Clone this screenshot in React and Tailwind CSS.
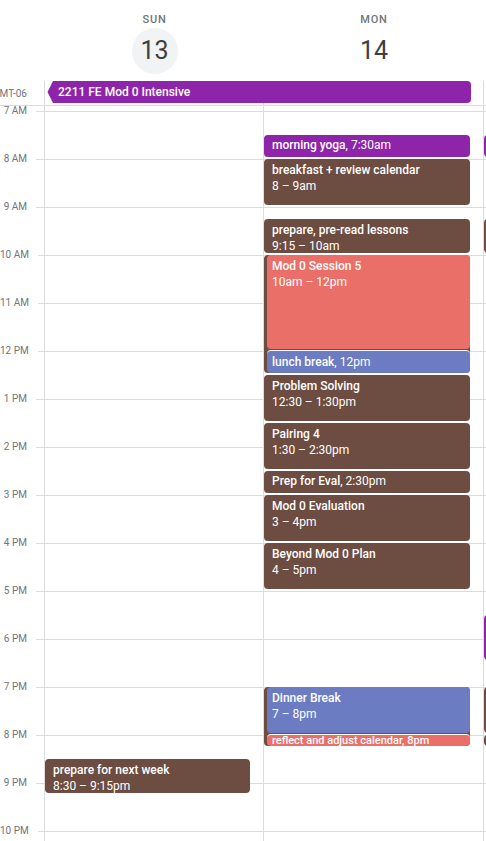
import React from "react";

function Ev({ className, children }) {
  return (
    <div className={"absolute rounded-[4px] overflow-hidden text-white text-[12px] leading-[16px] " + className}>
      {children}
    </div>
  );
}

const HOURS = ["7 AM","8 AM","9 AM","10 AM","11 AM","12 PM","1 PM","2 PM","3 PM","4 PM","5 PM","6 PM","7 PM","8 PM","9 PM","10 PM"];

function Lines() {
  return (
    <div className="flex flex-col pt-[5px]">
      {HOURS.map((h) => (
        <div key={h} className="h-[48px] shrink-0 border-t border-[#dadce0]" />
      ))}
    </div>
  );
}

export default function App() {
  return (
    <div className="w-[486px] h-[841px] overflow-hidden bg-white font-[family-name:Roboto,sans-serif]">
      {/* header */}
      <div className="flex h-[81px]">
        <div className="w-[45px] shrink-0" />
        <div className="w-[219px] shrink-0 flex flex-col items-center pt-[14px]">
          <div className="text-[11px] leading-[12px] font-medium tracking-[0.8px] text-[#70757a]">SUN</div>
          <div className="mt-[2px] w-[46px] h-[46px] rounded-full bg-[#f1f3f4] flex items-center justify-center text-[25px] text-[#3c4043]">13</div>
        </div>
        <div className="w-[220px] shrink-0 flex flex-col items-center pt-[14px]">
          <div className="text-[11px] leading-[12px] font-medium tracking-[0.8px] text-[#70757a]">MON</div>
          <div className="mt-[2px] w-[46px] h-[46px] rounded-full flex items-center justify-center text-[25px] text-[#3c4043]">14</div>
        </div>
      </div>

      {/* all-day row */}
      <div className="flex h-[25px] border-b border-[#dadce0]">
        <div className="w-[45px] shrink-0 border-r border-[#dadce0] flex items-center justify-end pr-[17px] text-[10px] text-[#70757a] whitespace-nowrap">
          GMT-06
        </div>
        <div className="relative flex flex-1">
          <div className="w-[219px] shrink-0 border-r border-[#dadce0]" />
          <div className="w-[220px] shrink-0 border-r border-[#dadce0]" />
          <div className="flex-1" />
          <div className="absolute left-[2px] top-0 h-[22px] flex">
            <svg width="6" height="22" viewBox="0 0 6 22" className="block">
              <polygon points="6,0 0.5,11 6,22" fill="#8e24aa" />
            </svg>
            <div className="w-[418px] h-[22px] bg-[#8e24aa] rounded-r-[4px] pl-[5px] flex items-center text-white text-[12px] font-medium">
              2211 FE Mod 0 Intensive
            </div>
          </div>
        </div>
      </div>

      {/* body */}
      <div className="flex">
        <div className="w-[45px] shrink-0 border-r border-[#dadce0] flex flex-col pt-[5px]">
          {HOURS.map((h) => (
            <div key={h} className="h-[48px] shrink-0 flex justify-end">
              <span className="-mt-[6px] h-[12px] leading-[12px] text-[10px] text-[#70757a] whitespace-nowrap mr-[9px]">{h}</span>
              <div className="w-[8px] border-t border-[#dadce0]" />
            </div>
          ))}
        </div>

        {/* SUN */}
        <div className="relative w-[219px] shrink-0 border-r border-[#dadce0]">
          <Lines />
          <Ev className="left-0 top-[653px] w-[205px] h-[34px] bg-[#6d4c41] pl-[8px] pt-[3px]">
            <div className="font-medium">prepare for next week</div>
            <div>8:30 – 9:15pm</div>
          </Ev>
        </div>

        {/* MON */}
        <div className="relative w-[220px] shrink-0 border-r border-[#dadce0]">
          <Lines />
          <Ev className="left-0 top-[29px] w-[206px] h-[22px] bg-[#8e24aa] pl-[8px] pt-[2px]">
            <span className="font-medium">morning yoga</span>, 7:30am
          </Ev>
          <Ev className="left-0 top-[53px] w-[206px] h-[46px] bg-[#6d4c41] pl-[8px] pt-[3px]">
            <div className="font-medium">breakfast + review calendar</div>
            <div>8 – 9am</div>
          </Ev>
          <Ev className="left-0 top-[113px] w-[206px] h-[34px] bg-[#6d4c41] pl-[8px] pt-[3px]">
            <div className="font-medium">prepare, pre-read lessons</div>
            <div>9:15 – 10am</div>
          </Ev>
          <Ev className="left-0 top-[149px] w-[206px] h-[118px] bg-[#6d4c41]" />
          <Ev className="left-[3px] top-[149px] w-[203px] h-[94px] bg-[#ea6f68] pl-[5px] pt-[3px]">
            <div className="font-medium">Mod 0 Session 5</div>
            <div>10am – 12pm</div>
          </Ev>
          <Ev className="left-[3px] top-[244px] w-[203px] h-[23px] bg-[#6b7cc2] pl-[5px] pt-[3px] border-t border-white">
            <span className="font-medium">lunch break</span>, 12pm
          </Ev>
          <Ev className="left-0 top-[269px] w-[206px] h-[46px] bg-[#6d4c41] pl-[8px] pt-[3px]">
            <div className="font-medium">Problem Solving</div>
            <div>12:30 – 1:30pm</div>
          </Ev>
          <Ev className="left-0 top-[317px] w-[206px] h-[46px] bg-[#6d4c41] pl-[8px] pt-[3px]">
            <div className="font-medium">Pairing 4</div>
            <div>1:30 – 2:30pm</div>
          </Ev>
          <Ev className="left-0 top-[365px] w-[206px] h-[22px] bg-[#6d4c41] pl-[8px] pt-[2px]">
            <span className="font-medium">Prep for Eval</span>, 2:30pm
          </Ev>
          <Ev className="left-0 top-[389px] w-[206px] h-[46px] bg-[#6d4c41] pl-[8px] pt-[3px]">
            <div className="font-medium">Mod 0 Evaluation</div>
            <div>3 – 4pm</div>
          </Ev>
          <Ev className="left-0 top-[437px] w-[206px] h-[46px] bg-[#6d4c41] pl-[8px] pt-[3px]">
            <div className="font-medium">Beyond Mod 0 Plan</div>
            <div>4 – 5pm</div>
          </Ev>
          <Ev className="left-0 top-[581px] w-[206px] h-[59px] bg-[#6d4c41]" />
          <Ev className="left-[3px] top-[581px] w-[203px] h-[46px] bg-[#6b7cc2] pl-[5px] pt-[3px]">
            <div className="font-medium">Dinner Break</div>
            <div>7 – 8pm</div>
          </Ev>
          <Ev className="left-[3px] top-[628px] w-[203px] h-[12px] bg-[#ea6f68] pl-[5px] border-t border-white">
            <div className="text-[11px] leading-[11px] whitespace-nowrap font-medium">
              reflect and adjust calendar, 8pm
            </div>
          </Ev>
        </div>

        {/* TUE */}
        <div className="relative flex-1">
          <Lines />
          <Ev className="left-0 top-[29px] w-[200px] h-[22px] bg-[#8e24aa]" />
          <Ev className="left-0 top-[113px] w-[200px] h-[34px] bg-[#6d4c41]" />
          <Ev className="left-0 top-[509px] w-[200px] h-[45px] bg-[#8e24aa]" />
          <Ev className="left-0 top-[581px] w-[200px] h-[46px] bg-[#6d4c41]" />
          <Ev className="left-0 top-[629px] w-[200px] h-[11px] bg-[#6d4c41]" />
        </div>
      </div>
    </div>
  );
}
